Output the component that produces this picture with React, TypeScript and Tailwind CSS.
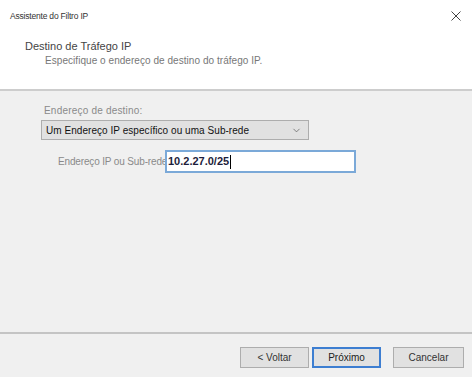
import { ChevronDown } from 'lucide-react';

const FONT = { fontFamily: '"Liberation Sans", Arial, sans-serif' };

export default function App() {
  return (
    <div className="w-[474px] h-[377px] bg-white flex flex-col overflow-hidden text-[#444]" style={FONT}>
      {/* Header */}
      <div className="h-[89px] w-[472px] flex flex-col">
        <div className="flex items-center justify-between pl-[10px] pr-[11px] pt-[10px]">
          <span className="text-[8.5px] tracking-[-0.2px] text-[#333]">Assistente do Filtro IP</span>
          <svg width="10" height="10" viewBox="0 0 10 10" className="text-[#444]">
            <path d="M0.5 0.5L9.5 9.5M9.5 0.5L0.5 9.5" stroke="currentColor" strokeWidth="1" />
          </svg>
        </div>
        <div className="pl-[25px] pt-[16px] text-[11px] leading-[14px] text-[#444]">Destino de Tráfego IP</div>
        <div className="pl-[45px] pt-[1px] text-[10px] leading-[13px] tracking-[0.05px] text-[#777]">
          Especifique o endereço de destino do tráfego IP.
        </div>
      </div>
      <div className="h-[2px] w-[472px] bg-[#cdcdcd]" />

      {/* Body */}
      <div className="w-[472px] flex-1 bg-[#f0f0f0] flex flex-col">
        <div className="pl-[44px] pt-[13px] text-[10px] leading-[13px] tracking-[0.2px] text-[#8a8a8a]">
          Endereço de destino:
        </div>
        <div className="ml-[41px] mt-[3px] w-[268px] h-[20px] bg-[#e1e1e1] border border-[#adadad] flex items-center justify-between pl-[4px] pr-[6px]">
          <span className="text-[10px] tracking-[0.05px] text-[#111]">Um Endereço IP específico ou uma Sub-rede</span>
          <ChevronDown size={11} strokeWidth={1.5} className="text-[#555]" />
        </div>
        <div className="flex items-center mt-[10px] pl-[58px]">
          <span className="w-[107px] text-[10px] tracking-[-0.15px] text-[#8a8a8a] whitespace-nowrap">
            Endereço IP ou Sub-rede
          </span>
          <div className="w-[191px] h-[23px] bg-white border-2 border-[#7ba9d8] flex items-center pl-[1px]">
            <span className="text-[11px] font-semibold text-[#1d1d3b]">10.2.27.0/25</span>
            <span className="w-px h-[14px] bg-black ml-px" />
          </div>
        </div>

        <div className="flex-1" />
        <div className="h-[2px] w-[472px] bg-[#c4c4c4]" />
        <div className="flex justify-end items-center pr-[8px] pt-[13px] pb-[9px] gap-[3px]">
          <button className="w-[69px] h-[21px] bg-[#e1e1e1] border border-[#adadad] text-[10px] text-[#333]">
            &lt; Voltar
          </button>
          <button className="w-[69px] h-[21px] bg-[#e1e1e1] border-2 border-[#3d7ed1] text-[10px] text-[#222] mr-[9px]">
            Próximo
          </button>
          <button className="w-[71px] h-[21px] bg-[#e1e1e1] border border-[#adadad] text-[10px] text-[#333]">
            Cancelar
          </button>
        </div>
      </div>
    </div>
  );
}
